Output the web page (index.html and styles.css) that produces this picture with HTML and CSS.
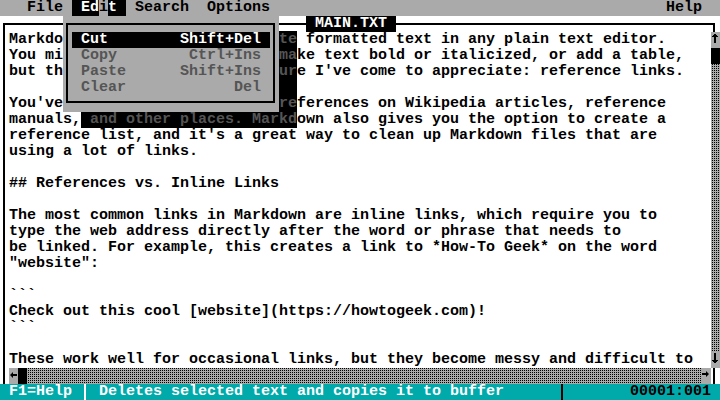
FILE: index.html
```html
<!DOCTYPE html>
<html lang="en">
<head>
<meta charset="utf-8">
<title>MAIN.TXT</title>
<link rel="stylesheet" href="styles.css">
</head>
<body>
<div class="screen">
  <div class="menubar">
    <div class="mb-left"><span class="pre">   File </span><span class="pre hl"> Ed</span><span class="pre hl-gap">i</span><span class="pre hl">t </span><span class="pre"> Search  Options</span></div>
    <div class="mb-right pre">Help  </div>
  </div>

  <div class="titlerow">
    <div class="cell corner-tl"></div>
    <div class="hline first"></div>
    <div class="title pre"> MAIN.TXT </div>
    <div class="hline rest"></div>
    <div class="cell corner-tr"></div>
  </div>

  <div class="editor">
    <div class="edge vline-l"></div>
    <div class="text">
      <div class="line">Markdo<span class="gap"></span><span class="sh">te</span> formatted text in any plain text editor.</div>
      <div class="line">You mi<span class="gap"></span><span class="sh">ma</span>ke text bold or italicized, or add a table,</div>
      <div class="line">but th<span class="gap"></span><span class="sh">ur</span>e I've come to appreciate: reference links.</div>
      <div class="line"><span class="gap wide"></span><span class="sh">  </span></div>
      <div class="line">You've<span class="gap"></span><span class="sh">re</span>ferences on Wikipedia articles, reference</div>
      <div class="line">manuals,<span class="sh"> and other places. Markd</span>own also gives you the option to create a</div>
      <div class="line">reference list, and it's a great way to clean up Markdown files that are</div>
      <div class="line">using a lot of links.</div>
      <div class="line"></div>
      <div class="line">## References vs. Inline Links</div>
      <div class="line"></div>
      <div class="line">The most common links in Markdown are inline links, which require you to</div>
      <div class="line">type the web address directly after the word or phrase that needs to</div>
      <div class="line">be linked. For example, this creates a link to *How-To Geek* on the word</div>
      <div class="line">"website":</div>
      <div class="line"></div>
      <div class="line">```</div>
      <div class="line">Check out this cool [website](https://howtogeek.com)!</div>
      <div class="line">```</div>
      <div class="line"></div>
      <div class="line">These work well for occasional links, but they become messy and difficult to</div>
    </div>
    <div class="vscroll">
      <div class="cell btn"><svg width="9" height="16" viewBox="0 0 9 16"><path d="M3 2H5V3H6V4H7V5H5V11H3V5H1V4H2V3H3Z" fill="#000"/></svg></div>
      <div class="cell thumb"></div>
      <div class="track"></div>
      <div class="cell btn"><svg width="9" height="16" viewBox="0 0 9 16"><path d="M3 1H5V8H7V9H6V10H5V11H3V10H2V9H1V8H3Z" fill="#000"/></svg></div>
    </div>
  </div>

  <div class="hscrollrow">
    <div class="edge vline-l"></div>
    <div class="hscroll">
      <div class="cell btn"><svg width="9" height="16" viewBox="0 0 9 16"><path d="M1 7L4 4V6H8V8H4V10Z" fill="#000"/></svg></div>
      <div class="cell thumb"></div>
      <div class="track"></div>
      <div class="cell btn"><svg width="9" height="16" viewBox="0 0 9 16"><path d="M7 6L4 3V5H0V7H4V9Z" fill="#000"/></svg></div>
    </div>
    <div class="edge vline-r"></div>
  </div>

  <div class="status">
    <span class="pre st-a"> F1=Help </span>
    <span class="edge st-w"></span>
    <span class="pre st-msg"> Deletes selected text and copies it to buffer</span>
    <span class="edge st-k"></span>
    <span class="pre st-pos">00001:001 </span>
  </div>

  <div class="menu">
    <div class="menu-frame">
      <div class="item sel"><span>Cut</span><span>Shift+Del</span></div>
      <div class="item dis"><span>Copy</span><span>Ctrl+Ins</span></div>
      <div class="item dis"><span>Paste</span><span>Shift+Ins</span></div>
      <div class="item dis"><span>Clear</span><span>Del</span></div>
    </div>
  </div>
</div>
</body>
</html>
```
FILE: styles.css
```css
* { box-sizing: border-box; margin: 0; padding: 0; }
html, body { width: 720px; height: 400px; overflow: hidden; background: #000; }
body { margin: 0; }

.screen {
  position: relative;
  width: 720px;
  height: 400px;
  display: flex;
  flex-direction: column;
  font-family: "Liberation Mono", "DejaVu Sans Mono", monospace;
  font-weight: bold;
  font-size: 15px;
  line-height: 16px;
  color: #000;
}
.pre { white-space: pre; }

/* menu bar */
.menubar { height: 16px; flex: none; background: #aaa; display: flex; justify-content: space-between; }
.mb-left { display: flex; }
.hl { background: #000; color: #fff; }
.hl-gap { background: #aaa; color: #000; }

/* window title row */
.titlerow { height: 16px; flex: none; background: #fff; display: flex; }
.cell { width: 9px; height: 16px; flex: none; }
.edge { width: 9px; flex: none; }
.corner-tl {
  background:
    linear-gradient(#000, #000) 3px 7px / 6px 2px no-repeat,
    linear-gradient(#000, #000) 3px 7px / 2px 9px no-repeat,
    #fff;
}
.corner-tr {
  background:
    linear-gradient(#000, #000) 0 7px / 4px 2px no-repeat,
    linear-gradient(#000, #000) 2px 7px / 2px 9px no-repeat,
    #fff;
}
.hline { height: 16px; background: linear-gradient(#000, #000) 0 7px / 100% 2px no-repeat, #fff; }
.hline.first { width: 297px; flex: none; }
.hline.rest { flex: 1; }
.title { width: 90px; flex: none; background: #000; color: #fff; }

/* editor */
.editor { height: 336px; flex: none; display: flex; }
.vline-l { background: linear-gradient(#000, #000) 3px 0 / 2px 100% no-repeat, #fff; }
.vline-r { background: linear-gradient(#000, #000) 2px 0 / 2px 100% no-repeat, #fff; }
.text { width: 702px; flex: none; background: #fff; display: flex; flex-direction: column; }
.line { height: 16px; white-space: pre; }
.gap { display: inline-block; width: 216px; height: 16px; vertical-align: top; }
.gap.wide { width: 270px; }
.sh { background: #000; color: #555; }

/* scrollbars */
.vscroll { width: 9px; flex: none; display: flex; flex-direction: column; }
.btn { background: #aaa; display: flex; }
.btn svg { display: block; }
.thumb { background: #000; }
.track { flex: 1; background: conic-gradient(#000 0 25%, #aaa 0) 0 0 / 2px 2px; }
.hscrollrow { height: 16px; flex: none; display: flex; }
.hscroll { width: 702px; flex: none; display: flex; }

/* status bar */
.status { height: 16px; flex: none; background: #00aaaa; color: #fff; display: flex; }
.st-w { background: linear-gradient(#fff, #fff) 3px 0 / 2px 100% no-repeat; }
.st-k { background: linear-gradient(#000, #000) 3px 0 / 2px 100% no-repeat; }
.st-msg { flex: 1; }
.st-pos { width: 153px; flex: none; text-align: right; color: #000; }

/* Edit drop-down menu (overlay) */
.menu { position: absolute; left: 63px; top: 16px; width: 216px; height: 96px; background: #aaa; }
.menu-frame { margin: 7px 4px 9px 3px; height: 80px; border: 2px solid #000; padding: 7px 3px 5px 4px; }
.item { height: 16px; display: flex; justify-content: space-between; padding: 0 9px; white-space: pre; }
.sel { background: #000; color: #fff; }
.dis { color: #555; }
```
